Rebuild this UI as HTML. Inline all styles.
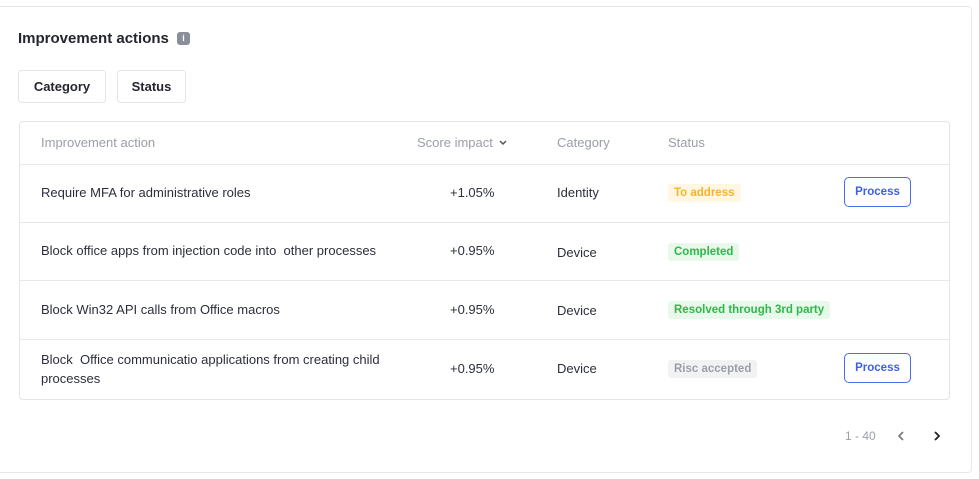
<!DOCTYPE html>
<html><head><style>
body{margin:0;width:979px;height:479px;background:#fff;font-family:"Liberation Sans",sans-serif;position:relative;overflow:hidden;color:#2b2f3a}
.card{position:absolute;left:-10px;top:6px;width:980px;height:465px;border:1px solid #e6e8ec;border-radius:4px}
.abs{position:absolute;white-space:nowrap}
.title{left:18px;top:30px;font-size:15px;font-weight:bold;color:#23262f}
.info{left:177px;top:32px;width:13px;height:13px;border-radius:3px;background:#8a8e99;color:#fff;font-size:9px;font-weight:bold;text-align:center;line-height:13px}
.btn{top:70px;height:31px;border:1px solid #e3e5ea;border-radius:4px;font-size:13px;font-weight:bold;line-height:31px;text-align:center;color:#23262f}
.tbl{position:absolute;left:19px;top:121px;width:929px;height:277px;border:1px solid #e3e5ea;border-radius:4px}
.hl{position:absolute;left:20px;width:929px;height:1px;background:#e6e8ec}
.th{top:135px;font-size:13px;color:#9a9ea8}
.td{font-size:13px;color:#2b2f3a}
.tag{font-size:11.5px;font-weight:bold;padding:3px 6px;border-radius:3px}
.proc{left:844px;width:65px;height:28px;border:1.5px solid #4a6cf0;border-radius:5px;color:#3e5fe8;font-size:11.5px;font-weight:bold;text-align:center;line-height:28px}
</style></head><body>
<div class="card"></div>
<div class="abs title">Improvement actions</div>
<div class="abs info">i</div>
<div class="abs btn" style="left:18px;width:86px">Category</div>
<div class="abs btn" style="left:117px;width:67px">Status</div>
<div class="tbl"></div>
<div class="hl" style="top:164px"></div>
<div class="hl" style="top:222px"></div>
<div class="hl" style="top:280px"></div>
<div class="hl" style="top:339px"></div>
<div class="abs th" style="left:41px">Improvement action</div>
<div class="abs th" style="left:417px">Score impact <svg width="10" height="8" viewBox="0 0 10 8" style="margin-left:2px"><path d="M2 2l3 3 3-3" fill="none" stroke="#555" stroke-width="1.5"/></svg></div>
<div class="abs th" style="left:557px">Category</div>
<div class="abs th" style="left:668px">Status</div>

<div class="abs td" style="left:41px;top:185px">Require MFA for administrative roles</div>
<div class="abs td" style="left:450px;top:185px">+1.05%</div>
<div class="abs td" style="left:557px;top:185px">Identity</div>
<div class="abs tag" style="left:668px;top:184px;background:#fff6e3;color:#f5b42a">To address</div>
<div class="abs proc" style="top:177px">Process</div>

<div class="abs td" style="left:41px;top:243px">Block office apps from injection code into&nbsp; other processes</div>
<div class="abs td" style="left:450px;top:243px">+0.95%</div>
<div class="abs td" style="left:557px;top:245px">Device</div>
<div class="abs tag" style="left:668px;top:243px;background:#e8f8ea;color:#2fb84a">Completed</div>

<div class="abs td" style="left:41px;top:302px">Block Win32 API calls from Office macros</div>
<div class="abs td" style="left:450px;top:302px">+0.95%</div>
<div class="abs td" style="left:557px;top:303px">Device</div>
<div class="abs tag" style="left:668px;top:301px;background:#e8f8ea;color:#2fb84a">Resolved through 3rd party</div>

<div class="abs td" style="left:41px;top:350px;line-height:19px">Block&nbsp; Office communicatio applications from creating child<br>processes</div>
<div class="abs td" style="left:450px;top:361px">+0.95%</div>
<div class="abs td" style="left:557px;top:361px">Device</div>
<div class="abs tag" style="left:668px;top:360px;background:#f1f2f4;color:#9a9ea8">Risc accepted</div>
<div class="abs proc" style="top:353px">Process</div>

<div class="abs" style="left:845px;top:429px;font-size:12px;color:#9a9ea8">1 - 40</div>
<svg class="abs" style="left:896px;top:430px" width="10" height="12" viewBox="0 0 10 12"><path d="M7 2L3 6l4 4" fill="none" stroke="#777" stroke-width="1.6"/></svg>
<svg class="abs" style="left:932px;top:430px" width="10" height="12" viewBox="0 0 10 12"><path d="M3 2l4 4-4 4" fill="none" stroke="#222" stroke-width="1.8"/></svg>
</body></html>
